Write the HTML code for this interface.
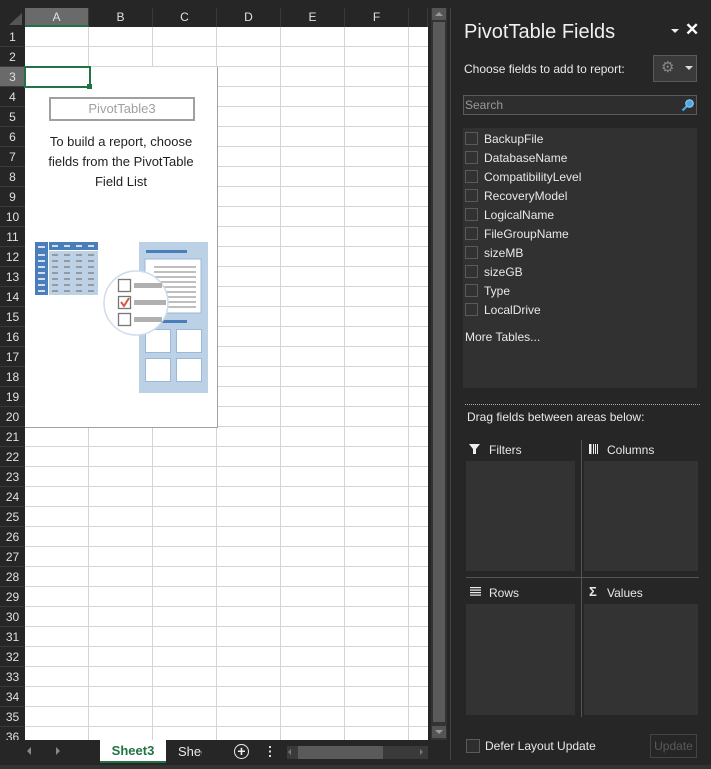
<!DOCTYPE html><html><head><style>
*{margin:0;padding:0;box-sizing:border-box}
body{width:711px;height:769px;background:#262626;position:relative;overflow:hidden;font-family:"Liberation Sans",sans-serif;}
.a{position:absolute}
.grid{left:25px;top:27px;width:403px;height:713px;background-color:#fff;
background-image:linear-gradient(to right,#d4d4d4 1px,transparent 1px),linear-gradient(to bottom,#d4d4d4 1px,transparent 1px);
background-size:64px 20px;background-position:-1px -1px}
.ch{top:8px;height:19px;width:64px;color:#e0e0e0;font-size:12px;text-align:center;line-height:19px;border-right:1px solid #3a3a3a;background:#262626}
.rh{left:0;width:25px;height:20px;color:#e0e0e0;font-size:12px;text-align:center;line-height:20px;border-bottom:1px solid #3a3a3a;background:#262626}
.cb{width:13px;height:13px;border:1px solid #5a5a5a;background:#323232}
.fl{color:#e8e8e8;font-size:12px}
.box{background:#333}
</style></head><body>
<div class="a" style="left:0;top:8px;width:25px;height:19px;background:#262626"></div>
<div class="a" style="left:9px;top:13px;width:0;height:0;border-left:13px solid transparent;border-bottom:12px solid #555"></div>
<div class="a grid"></div>
<div class="a ch" style="left:25px;background:#6a6a6a;border-bottom:2px solid #217346">A</div>
<div class="a ch" style="left:89px">B</div>
<div class="a ch" style="left:153px">C</div>
<div class="a ch" style="left:217px">D</div>
<div class="a ch" style="left:281px">E</div>
<div class="a ch" style="left:345px">F</div>
<div class="a ch" style="left:409px;width:19px"></div>
<div id="rows"></div>
<script>
var s='';for(var i=1;i<=36;i++){s+='<div class="a rh" style="top:'+(27+(i-1)*20)+'px;'+(i==3?'background:#6a6a6a':'')+'">'+i+'</div>';}
document.getElementById('rows').innerHTML=s;
</script>
<div class="a" style="left:25px;top:67px;width:193px;height:361px;background:#fff;border-right:1px solid #a0a0a0;border-bottom:1px solid #a0a0a0"></div>
<div class="a" style="left:24px;top:66px;width:67px;height:22px;border:2px solid #217346"></div>
<div class="a" style="left:87px;top:84px;width:5px;height:5px;background:#217346"></div>
<div class="a" style="left:49px;top:97px;width:146px;height:24px;border:2px solid #a0a0a0;color:#a0a0a0;font-size:13px;text-align:center;line-height:20px">PivotTable3</div>
<div class="a" style="left:36px;top:132px;width:170px;color:#222;font-size:13px;text-align:center;line-height:20px">To build a report, choose fields from the PivotTable Field List</div>
<svg class="a" style="left:20px;top:230px" width="200" height="170">
<rect x="15" y="12" width="13" height="53" fill="#4a7ebb"/><rect x="29" y="12" width="49" height="8" fill="#4a7ebb"/>
<rect x="29" y="21" width="49" height="44" fill="#bcd0e6"/>
<g stroke="#fff" stroke-width="1.5"><line x1="18" y1="17" x2="25" y2="17"/><line x1="32" y1="16" x2="38" y2="16"/><line x1="44" y1="16" x2="50" y2="16"/><line x1="56" y1="16" x2="62" y2="16"/><line x1="68" y1="16" x2="74" y2="16"/></g>
<g stroke="#fff" stroke-width="1.5"><line x1="18" y1="25" x2="25" y2="25"/><line x1="18" y1="31" x2="25" y2="31"/><line x1="18" y1="37" x2="25" y2="37"/><line x1="18" y1="43" x2="25" y2="43"/><line x1="18" y1="49" x2="25" y2="49"/><line x1="18" y1="55" x2="25" y2="55"/><line x1="18" y1="61" x2="25" y2="61"/></g>
<g stroke="#888" stroke-width="1.5" stroke-dasharray="6 6"><line x1="32" y1="25" x2="76" y2="25"/><line x1="32" y1="31" x2="76" y2="31"/><line x1="32" y1="37" x2="76" y2="37"/><line x1="32" y1="43" x2="76" y2="43"/><line x1="32" y1="49" x2="76" y2="49"/><line x1="32" y1="55" x2="76" y2="55"/><line x1="32" y1="61" x2="76" y2="61"/></g>
<rect x="119" y="12" width="69" height="151" fill="#bcd0e6"/>
<rect x="126" y="20" width="41" height="3" fill="#4a7ebb"/>
<rect x="125" y="29" width="56" height="54" fill="#fff" stroke="#9ab8d8"/>
<g stroke="#aaa" stroke-width="1.5"><line x1="134" y1="37" x2="176" y2="37"/><line x1="134" y1="42" x2="176" y2="42"/><line x1="134" y1="47" x2="176" y2="47"/><line x1="134" y1="52" x2="176" y2="52"/><line x1="134" y1="57" x2="176" y2="57"/><line x1="134" y1="62" x2="176" y2="62"/><line x1="134" y1="67" x2="176" y2="67"/><line x1="134" y1="72" x2="176" y2="72"/><line x1="134" y1="77" x2="176" y2="77"/></g>
<rect x="126" y="90" width="41" height="3" fill="#4a7ebb"/>
<g fill="#fff" stroke="#9ab8d8"><rect x="125.5" y="99.5" width="25" height="23"/><rect x="156.5" y="99.5" width="25" height="23"/><rect x="125.5" y="128.5" width="25" height="23"/><rect x="156.5" y="128.5" width="25" height="23"/></g>
<circle cx="116" cy="73" r="32" fill="#fff" stroke="#cfdcec" stroke-width="1.5"/>
<g fill="#fff" stroke="#777" stroke-width="1.3"><rect x="98.5" y="49.5" width="12" height="12"/><rect x="98.5" y="66.5" width="12" height="12"/><rect x="98.5" y="83.5" width="12" height="12"/></g>
<path d="M101 72 L104 76 L109 68" stroke="#d9573a" stroke-width="2" fill="none"/>
<g fill="#b0b0b0"><rect x="114" y="53" width="28" height="5"/><rect x="114" y="70" width="32" height="5"/><rect x="114" y="87" width="28" height="5"/></g>
</svg>
<div class="a" style="left:431px;top:8px;width:16px;height:732px;background:#333"></div>
<div class="a" style="left:432px;top:8px;width:14px;height:12px;background:#555"></div>
<div class="a" style="left:435px;top:12px;border-left:4px solid transparent;border-right:4px solid transparent;border-bottom:4px solid #999"></div>
<div class="a" style="left:433px;top:22px;width:12px;height:700px;background:#5a5a5a"></div>
<div class="a" style="left:432px;top:726px;width:14px;height:12px;background:#555"></div>
<div class="a" style="left:435px;top:730px;border-left:4px solid transparent;border-right:4px solid transparent;border-top:4px solid #999"></div>
<div class="a" style="left:450px;top:8px;width:1px;height:752px;background:#444"></div>
<div class="a" style="left:0;top:740px;width:447px;height:25px;background:#262626"></div>
<div class="a" style="left:27px;top:747px;border-top:4px solid transparent;border-bottom:4px solid transparent;border-right:4px solid #888"></div>
<div class="a" style="left:56px;top:747px;border-top:4px solid transparent;border-bottom:4px solid transparent;border-left:4px solid #888"></div>
<div class="a" style="left:100px;top:740px;width:66px;height:23px;background:#fff;border-bottom:2px solid #217346;color:#217346;font-weight:bold;font-size:13px;text-align:center;line-height:22px">Sheet3</div>
<div class="a" style="left:178px;top:740px;width:24px;height:23px;overflow:hidden;color:#e8e8e8;font-size:13px;line-height:23px">Sheet</div>
<div class="a" style="left:234px;top:744px;width:15px;height:15px;border:1.5px solid #eee;border-radius:50%;color:#eee;font-size:14px;line-height:12px;text-align:center;font-weight:bold">+</div>
<div class="a" style="left:269px;top:746px;width:2px;height:11px;background:linear-gradient(#ddd 2px,transparent 2px,transparent 4.5px,#ddd 4.5px,#ddd 6.5px,transparent 6.5px,transparent 9px,#ddd 9px)"></div>
<div class="a" style="left:287px;top:746px;width:141px;height:13px;background:#3a3a3a"></div>
<div class="a" style="left:298px;top:746px;width:85px;height:13px;background:#5a5a5a"></div>
<div class="a" style="left:288px;top:749px;border-top:3px solid transparent;border-bottom:3px solid transparent;border-right:3px solid #777"></div>
<div class="a" style="left:420px;top:749px;border-top:3px solid transparent;border-bottom:3px solid transparent;border-left:3px solid #777"></div>
<div class="a" style="left:0;top:765px;width:711px;height:4px;background:#333"></div>
<div class="a" style="left:464px;top:21px;color:#f0f0f0;font-size:20px">PivotTable Fields</div>
<div class="a" style="left:671px;top:29px;border-left:4px solid transparent;border-right:4px solid transparent;border-top:4px solid #eee"></div>
<div class="a" style="left:685px;top:20px;color:#fff;font-size:17px;font-weight:bold">✕</div>
<div class="a fl" style="left:464px;top:62px">Choose fields to add to report:</div>
<div class="a" style="left:653px;top:55px;width:44px;height:27px;border:1px solid #5a5a5a;background:#3a3a3a"></div>
<div class="a" style="left:661px;top:58px;color:#888;font-size:15px">⚙</div>
<div class="a" style="left:685px;top:66px;border-left:4px solid transparent;border-right:4px solid transparent;border-top:4px solid #ddd"></div>
<div class="a" style="left:463px;top:95px;width:234px;height:20px;border:1px solid #5a5a5a;background:#2e2e2e;color:#999;font-size:12px;line-height:18px;padding-left:1px">Search</div>
<svg class="a" style="left:681px;top:98px" width="14" height="14"><circle cx="8.5" cy="5.5" r="3.8" fill="#4aa8e8" stroke="#9fd3f5"/><line x1="5.5" y1="8.5" x2="1.5" y2="12.5" stroke="#4aa8e8" stroke-width="2.2"/></svg>
<div class="a box" style="left:463px;top:128px;width:234px;height:260px;background:#313131"></div>
<div id="fields"></div>
<script>
var f=["BackupFile","DatabaseName","CompatibilityLevel","RecoveryModel","LogicalName","FileGroupName","sizeMB","sizeGB","Type","LocalDrive"],h='';
f.forEach(function(n,i){var y=132+i*19;h+='<div class="a cb" style="left:465px;top:'+y+'px"></div><div class="a fl" style="left:484px;top:'+(y)+'px">'+n+'</div>';});
document.getElementById('fields').innerHTML=h;
</script>
<div class="a fl" style="left:465px;top:330px">More Tables...</div>
<div class="a" style="left:465px;top:404px;width:235px;border-top:1px dotted #aaa"></div>
<div class="a fl" style="left:467px;top:410px">Drag fields between areas below:</div>
<div class="a" style="left:581px;top:440px;width:1px;height:277px;background:#555"></div>
<div class="a" style="left:466px;top:577px;width:233px;height:1px;background:#555"></div>
<svg class="a" style="left:469px;top:443px" width="12" height="12"><path d="M0 1H11L7 6V11H4V6Z" fill="#eee"/></svg>
<div class="a fl" style="left:489px;top:443px">Filters</div>
<svg class="a" style="left:589px;top:444px" width="11" height="10"><g fill="#eee"><rect x="0" y="0" width="2.5" height="10"/><rect x="4" y="0" width="1" height="10"/><rect x="6" y="0" width="1" height="10"/><rect x="8" y="0" width="1" height="10"/></g></svg>
<div class="a fl" style="left:607px;top:443px">Columns</div>
<div class="a box" style="left:466px;top:461px;width:109px;height:110px"></div>
<div class="a box" style="left:584px;top:461px;width:114px;height:110px"></div>
<svg class="a" style="left:470px;top:587px" width="11" height="10"><g fill="#eee"><rect y="0" width="11" height="1.2"/><rect y="2.5" width="11" height="1.2"/><rect y="5" width="11" height="1.2"/><rect y="7.5" width="11" height="1.2"/></g></svg>
<div class="a fl" style="left:489px;top:586px">Rows</div>
<div class="a fl" style="left:589px;top:584px;font-size:13px;font-weight:bold">Σ</div>
<div class="a fl" style="left:607px;top:586px">Values</div>
<div class="a box" style="left:466px;top:604px;width:109px;height:111px"></div>
<div class="a box" style="left:584px;top:604px;width:114px;height:111px"></div>
<div class="a cb" style="left:466px;top:739px;width:14px;height:14px;background:#2e2e2e"></div>
<div class="a fl" style="left:485px;top:739px">Defer Layout Update</div>
<div class="a" style="left:650px;top:734px;width:47px;height:24px;border:1px solid #444;color:#5a5a5a;font-size:12px;text-align:center;line-height:22px">Update</div>
</body></html>
